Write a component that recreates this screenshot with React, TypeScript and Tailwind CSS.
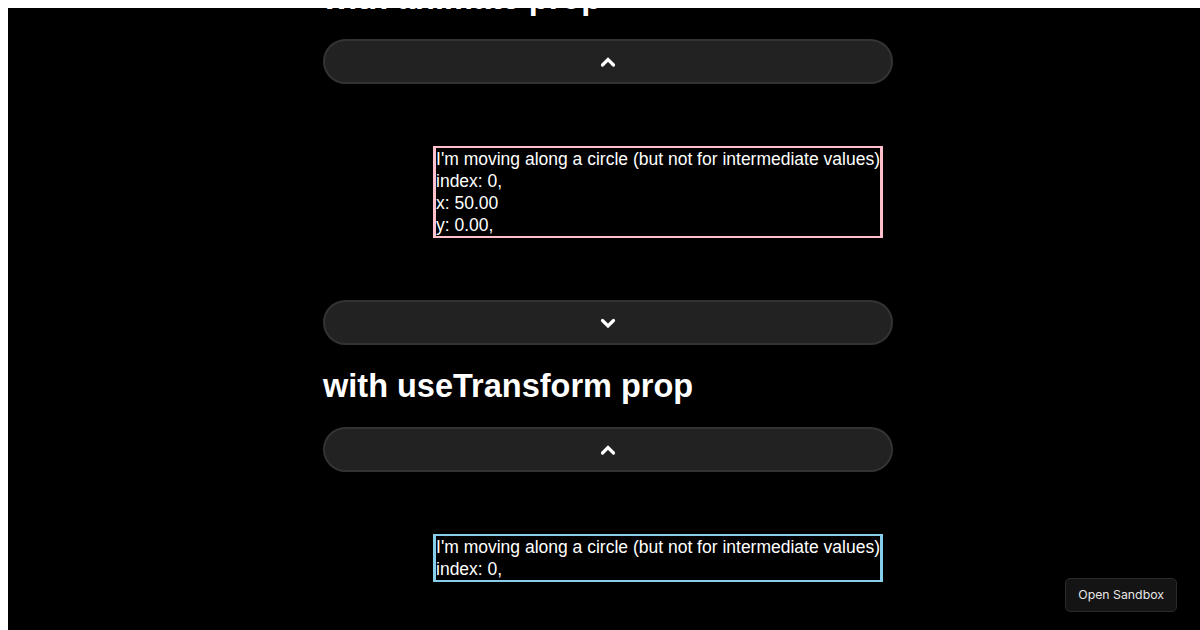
import React from "react"

// Chevron drawn to match the thick little arrow in the toggle buttons
function Chevron({ up }: { up: boolean }) {
  return (
    <svg width="18" height="12" viewBox="0 0 18 12" fill="none">
      <polyline
        points={up ? "3.5,9 9,3.5 14.5,9" : "3.5,3.5 9,9 14.5,3.5"}
        stroke="white"
        strokeWidth="3.2"
        strokeLinecap="round"
        strokeLinejoin="miter"
      />
    </svg>
  )
}

function Toggle({ up }: { up: boolean }) {
  return (
    <button className="flex h-[45px] w-full items-center justify-center rounded-full border-2 border-[#333] bg-[#222]">
      <Chevron up={up} />
    </button>
  )
}

function CircleBox({ color, lines }: { color: string; lines: string[] }) {
  return (
    <div className="pb-[62px] pt-[62px]">
      <div
        className={`mx-auto w-fit translate-x-[50px] border-x-[3px] border-y-2 ${color} text-[17.5px] leading-[22px] text-white`}
        style={{ fontFamily: '"Liberation Sans", Arial, sans-serif' }}
      >
        {lines.map((line) => (
          <div key={line}>{line}</div>
        ))}
      </div>
    </div>
  )
}

const heading = "text-[32.5px] font-bold leading-[37px] text-white"

export default function App() {
  return (
    <div
      className="relative h-[630px] w-[1200px] overflow-hidden bg-white pl-2 pt-2"
      style={{ fontFamily: '"Liberation Sans", Arial, sans-serif' }}
    >
      <div className="h-[622px] w-[1200px] overflow-hidden bg-black">
        <div className="ml-[315px] w-[570px]">
          <h1 className={`${heading} mb-[22px] mt-[-28px]`}>with animate prop</h1>
          <Toggle up />
          <CircleBox
            color="border-[#ffc0cb]"
            lines={[
              "I'm moving along a circle (but not for intermediate values)",
              "index: 0,",
              "x: 50.00",
              "y: 0.00,",
            ]}
          />
          <Toggle up={false} />
          <h1 className={`${heading} mb-[22px] mt-[23px]`}>with useTransform prop</h1>
          <Toggle up />
          <CircleBox
            color="border-[#87ceeb]"
            lines={["I'm moving along a circle (but not for intermediate values)", "index: 0,"]}
          />
        </div>
      </div>

      <button
        className="absolute bottom-[18px] right-[23px] h-[34px] rounded-[5px] border border-[#2a2a2a] bg-[#141414] px-3 text-[12.3px] text-[#e6e6e6]"
        style={{ fontFamily: "Inter, sans-serif" }}
      >
        Open Sandbox
      </button>
    </div>
  )
}
